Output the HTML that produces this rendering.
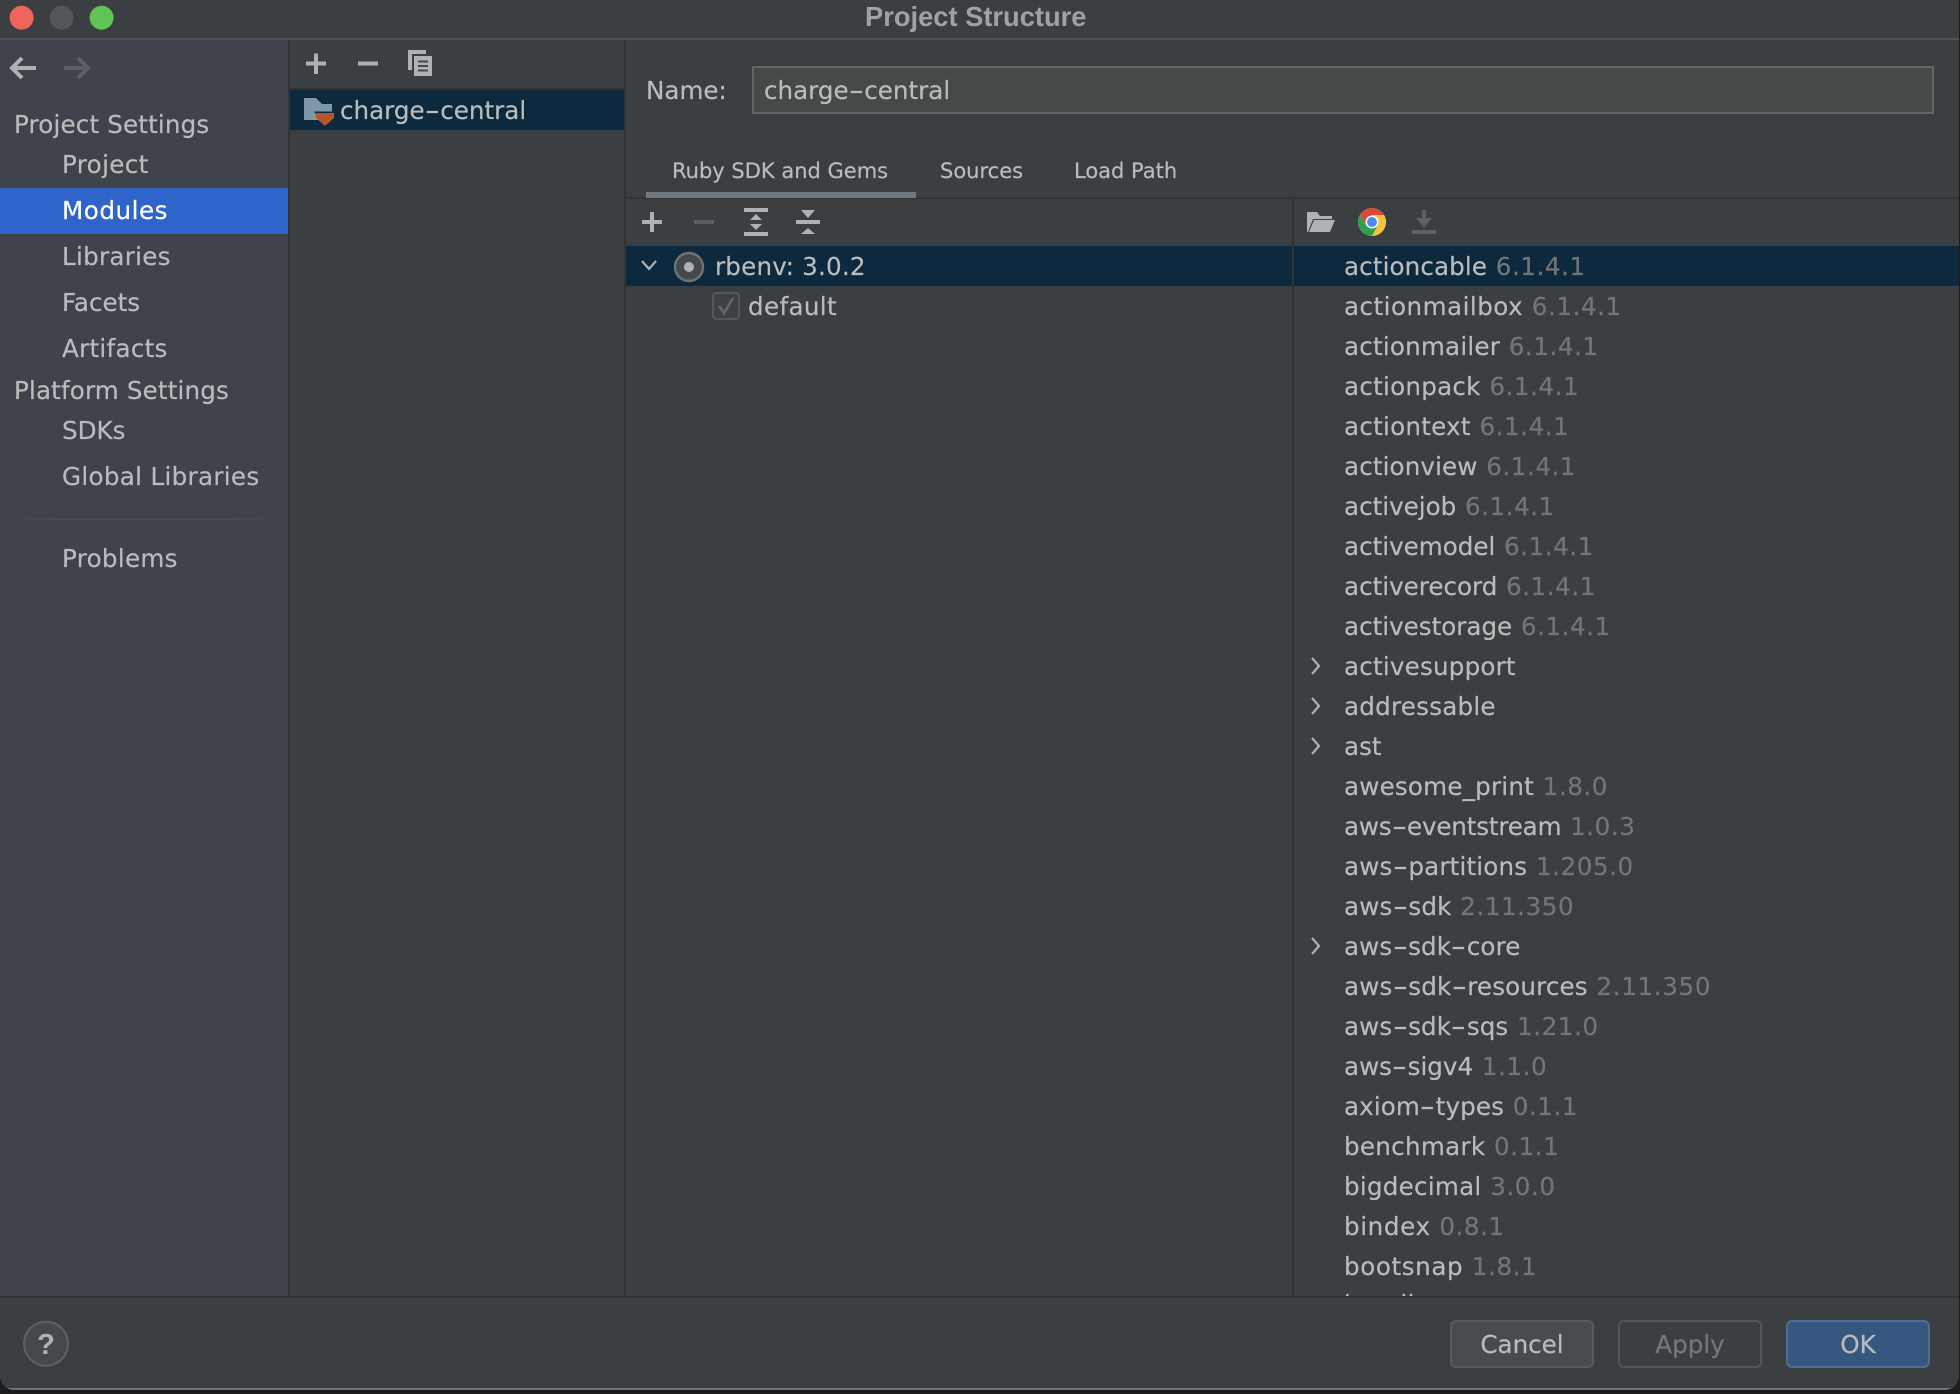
<!DOCTYPE html>
<html><head><meta charset="utf-8"><title>Project Structure</title>
<style>
html,body{margin:0;padding:0;background:#1c1c1c;width:1960px;height:1394px;overflow:hidden}
#w{position:absolute;left:0;top:0;width:1959px;height:1390px;background:#3c3f41;overflow:hidden;border-radius:0 0 14px 14px;font:24.6px/40px "DejaVu Sans","Liberation Sans",sans-serif;color:#bbb;filter:blur(.35px);-webkit-text-stroke:.2px currentColor}
#w>div,#w>svg{position:absolute}
.t{white-space:nowrap;height:40px}
.v{color:#747576;margin-left:8.7px;letter-spacing:.55px}
.h{display:inline-block;transform:scaleX(1.7);margin:0 3.4px}
.b{box-sizing:border-box;text-align:center;border-radius:6px;height:48px;line-height:46px;width:144px;top:1320px}
</style></head><body>
<div id="w">
<div style="left:0;top:39px;width:288px;height:1257px;background:#3f434c"></div>
<div style="left:0;top:38px;width:1959px;height:2px;background:#515355"></div>
<div style="left:288px;top:40px;width:2px;height:1256px;background:#323232"></div>
<div style="left:624px;top:40px;width:2px;height:1256px;background:#323232"></div>
<div style="left:290px;top:88px;width:334px;height:2px;background:#323232"></div>
<div style="left:0;top:1296px;width:1959px;height:2px;background:#323232"></div>
<div style="left:0;top:1388px;width:1959px;height:2px;background:#707274;border-radius:0 0 14px 14px"></div>

<div style="left:0;top:188px;width:288px;height:46px;background:#2f65ca"></div>
<div style="left:290px;top:90px;width:334px;height:40px;background:#0d293e"></div>
<div style="left:626px;top:246px;width:1333px;height:40px;background:#0d293e"></div>
<div style="left:1292px;top:198px;width:2px;height:1098px;background:#323232"></div>
<div style="left:626px;top:197px;width:1333px;height:2px;background:#323232"></div>
<div style="left:646px;top:192px;width:270px;height:6px;background:#6f7780"></div>
<div style="left:10px;top:518px;width:265px;height:2px;background:linear-gradient(90deg,#3f434c,#4c4d4e 20%,#4c4d4e 80%,#3f434c)"></div>

<div class="t" style="left:865px;top:-3px;font:bold 27.3px/40px 'Liberation Sans',sans-serif;color:#a0a1a2;-webkit-text-stroke:0">Project Structure</div>

<div class="t" style="left:14px;top:105px;letter-spacing:.16px">Project Settings</div>
<div class="t" style="left:62px;top:145px;letter-spacing:.35px">Project</div>
<div class="t" style="left:62px;top:191px;color:#fff;letter-spacing:.53px">Modules</div>
<div class="t" style="left:62px;top:237px;letter-spacing:.28px">Libraries</div>
<div class="t" style="left:62px;top:283px">Facets</div>
<div class="t" style="left:62px;top:329px;letter-spacing:.28px">Artifacts</div>
<div class="t" style="left:14px;top:371px;letter-spacing:.15px">Platform Settings</div>
<div class="t" style="left:62px;top:411px">SDKs</div>
<div class="t" style="left:62px;top:457px;letter-spacing:.31px">Global Libraries</div>
<div class="t" style="left:62px;top:539px;letter-spacing:.3px">Problems</div>

<div class="t" style="left:340px;top:91px">charge<i class="h" style="font-style:normal">-</i>central</div>
<div class="t" style="left:646px;top:71px">Name:</div>
<div style="left:752px;top:66px;width:1182px;height:48px;box-sizing:border-box;background:#45494a;border:2px solid #646464"></div>
<div class="t" style="left:764px;top:71px">charge<i class="h" style="font-style:normal">-</i>central</div>
<div class="t" style="left:672px;top:151px;font-size:21px">Ruby SDK and Gems</div>
<div class="t" style="left:940px;top:151px;font-size:21px">Sources</div>
<div class="t" style="left:1074px;top:151px;font-size:21px">Load Path</div>
<div class="t" style="left:715px;top:247px;letter-spacing:.2px">rbenv: 3.0.2</div>
<div class="t" style="left:748px;top:287px;letter-spacing:.35px">default</div>

<div class="t" style="left:1344px;top:247px"><span style="letter-spacing:.11px">actioncable</span><span class="v">6.1.4.1</span></div>
<div class="t" style="left:1344px;top:287px"><span style="letter-spacing:.48px">actionmailbox</span><span class="v">6.1.4.1</span></div>
<div class="t" style="left:1344px;top:327px"><span style="letter-spacing:.2px">actionmailer</span><span class="v">6.1.4.1</span></div>
<div class="t" style="left:1344px;top:367px"><span style="letter-spacing:.25px">actionpack</span><span class="v">6.1.4.1</span></div>
<div class="t" style="left:1344px;top:407px"><span style="letter-spacing:.25px">actiontext</span><span class="v">6.1.4.1</span></div>
<div class="t" style="left:1344px;top:447px"><span style="letter-spacing:.12px">actionview</span><span class="v">6.1.4.1</span></div>
<div class="t" style="left:1344px;top:487px">activejob<span class="v">6.1.4.1</span></div>
<div class="t" style="left:1344px;top:527px">activemodel<span class="v">6.1.4.1</span></div>
<div class="t" style="left:1344px;top:567px">activerecord<span class="v">6.1.4.1</span></div>
<div class="t" style="left:1344px;top:607px">activestorage<span class="v">6.1.4.1</span></div>
<div class="t" style="left:1344px;top:647px;letter-spacing:.2px">activesupport</div>
<div class="t" style="left:1344px;top:687px;letter-spacing:.23px">addressable</div>
<div class="t" style="left:1344px;top:727px">ast</div>
<div class="t" style="left:1344px;top:767px"><span style="letter-spacing:.2px">awesome_print</span><span class="v">1.8.0</span></div>
<div class="t" style="left:1344px;top:807px"><span style="letter-spacing:-.17px">aws<i class="h" style="font-style:normal">-</i>eventstream</span><span class="v">1.0.3</span></div>
<div class="t" style="left:1344px;top:847px"><span style="letter-spacing:.17px">aws<i class="h" style="font-style:normal">-</i>partitions</span><span class="v">1.205.0</span></div>
<div class="t" style="left:1344px;top:887px"><span style="letter-spacing:.17px">aws<i class="h" style="font-style:normal">-</i>sdk</span><span class="v">2.11.350</span></div>
<div class="t" style="left:1344px;top:927px;letter-spacing:.1px">aws<i class="h" style="font-style:normal">-</i>sdk<i class="h" style="font-style:normal">-</i>core</div>
<div class="t" style="left:1344px;top:967px"><span style="letter-spacing:.15px">aws<i class="h" style="font-style:normal">-</i>sdk<i class="h" style="font-style:normal">-</i>resources</span><span class="v" style="letter-spacing:.65px">2.11.350</span></div>
<div class="t" style="left:1344px;top:1007px"><span style="letter-spacing:.1px">aws<i class="h" style="font-style:normal">-</i>sdk<i class="h" style="font-style:normal">-</i>sqs</span><span class="v">1.21.0</span></div>
<div class="t" style="left:1344px;top:1047px"><span>aws<i class="h" style="font-style:normal">-</i>sigv4</span><span class="v">1.1.0</span></div>
<div class="t" style="left:1344px;top:1087px"><span style="letter-spacing:.1px">axiom<i class="h" style="font-style:normal">-</i>types</span><span class="v">0.1.1</span></div>
<div class="t" style="left:1344px;top:1127px"><span style="letter-spacing:.28px">benchmark</span><span class="v">0.1.1</span></div>
<div class="t" style="left:1344px;top:1167px"><span style="letter-spacing:.25px">bigdecimal</span><span class="v">3.0.0</span></div>
<div class="t" style="left:1344px;top:1207px"><span style="letter-spacing:.62px">bindex</span><span class="v">0.8.1</span></div>
<div class="t" style="left:1344px;top:1247px"><span style="letter-spacing:.6px">bootsnap</span><span class="v">1.8.1</span></div>
<div style="left:1294px;top:1285px;width:300px;height:11px;overflow:hidden"><div class="t" style="margin-left:50px;letter-spacing:.3px">bundler</div></div>

<div class="b" style="left:1450px;background:#494c4e;border:2px solid #595c5e;color:#bbb">Cancel</div>
<div class="b" style="left:1618px;border:2px solid #53565a;color:#777">Apply</div>
<div class="b" style="left:1786px;background:#365880;border:2px solid #4c708c;color:#bbb">OK</div>

<svg style="left:0;top:0" width="1959" height="1390" viewBox="0 0 1959 1390">
<circle cx="21.6" cy="17.7" r="12" fill="#f0655b"/>
<circle cx="61.6" cy="17.7" r="12" fill="#54575a"/>
<circle cx="101.6" cy="17.7" r="12" fill="#60c554"/>
<!-- back / forward -->
<path d="M36 68H13M22 58L12 68L22 78" fill="none" stroke="#afb1b3" stroke-width="4"/>
<path d="M64 68H87M78 58L88 68L78 78" fill="none" stroke="#5d5f61" stroke-width="4"/>
<!-- + - copy -->
<path d="M306 63.5H326M316 53.5V74" stroke="#afb1b3" stroke-width="4"/>
<path d="M358 63.5H378" stroke="#afb1b3" stroke-width="4"/>
<path d="M408 50H426V54H412V70H408Z" fill="#afb1b3"/>
<path d="M414 56H432V76H414Z" fill="#afb1b3"/>
<path d="M418 61.5H428M418 66H428M418 70.5H428" stroke="#45484a" stroke-width="2"/>
<!-- module folder -->
<path d="M304 98H316L322 104H332V120H304Z" fill="#7f97a8"/>
<path d="M314 111.500L336 111.500L325 128Z" fill="#0d293e"/>
<path d="M316 113H334V118L325 126L316 118Z" fill="#b5572a"/>
<!-- tree toolbar -->
<path d="M642 222H662M652 212V232" stroke="#afb1b3" stroke-width="4"/>
<path d="M694 222H714" stroke="#5a5c5e" stroke-width="4"/>
<path d="M744 210H768M744 234H768" stroke="#afb1b3" stroke-width="4"/>
<path d="M750 220L756 214L762 220ZM750 224L756 230L762 224Z" fill="#afb1b3"/>
<path d="M796 222H820" stroke="#afb1b3" stroke-width="4"/>
<path d="M801 210H815L808 218ZM801 234H815L808 228Z" fill="#afb1b3"/>
<!-- tree row -->
<path d="M642 261L649 269L656 261" fill="none" stroke="#afb1b3" stroke-width="2.200"/>
<circle cx="689" cy="267" r="14" fill="#46494b" stroke="#6f7173" stroke-width="2.500"/>
<circle cx="689" cy="267" r="5" fill="#afb1b3"/>
<rect x="713" y="293" width="26" height="26" rx="3" fill="#3f4244" stroke="#55585a" stroke-width="2"/>
<path d="M719 306L724 313L733 298" fill="none" stroke="#646668" stroke-width="2.600"/>
<!-- gem toolbar -->
<path d="M1307 212H1317L1320 216H1332V219H1313L1308 232H1307ZM1314 220H1335L1330 232H1309Z" fill="#afb1b3"/>
<circle cx="1372" cy="222" r="14" fill="#fff"/>
<path d="M1384.100 215A14 14 0 0 0 1359.900 215L1366 225Z" fill="#d8483b"/>
<path d="M1384.100 215A14 14 0 0 1 1372 236L1378 225L1372 215Z" fill="#f5c33b"/>
<path d="M1359.900 215A14 14 0 0 0 1372 236L1378 225L1366 225Z" fill="#2ea04a"/>
<circle cx="1372" cy="222" r="6.500" fill="#fff"/>
<circle cx="1372" cy="222" r="5" fill="#4a8af4"/>
<path d="M1412 232H1436" stroke="#5d5f61" stroke-width="4"/>
<path d="M1422 210H1426V218H1432L1424 228L1416 218H1422Z" fill="#5d5f61"/>
<!-- gem chevrons -->
<g fill="none" stroke="#afb1b3" stroke-width="2.200">
<path d="M1312 658L1319 666L1312 674"/>
<path d="M1312 698L1319 706L1312 714"/>
<path d="M1312 738L1319 746L1312 754"/>
<path d="M1312 938L1319 946L1312 954"/>
</g>
<!-- help -->
<circle cx="46" cy="1343.700" r="22" fill="#46494b" stroke="#5e6060" stroke-width="2"/>
<text x="46" y="1354" text-anchor="middle" font-family="Liberation Sans,sans-serif" font-weight="bold" font-size="29" fill="#afb1b3" style="-webkit-text-stroke:0">?</text>
</svg>
</div>
</body></html>
